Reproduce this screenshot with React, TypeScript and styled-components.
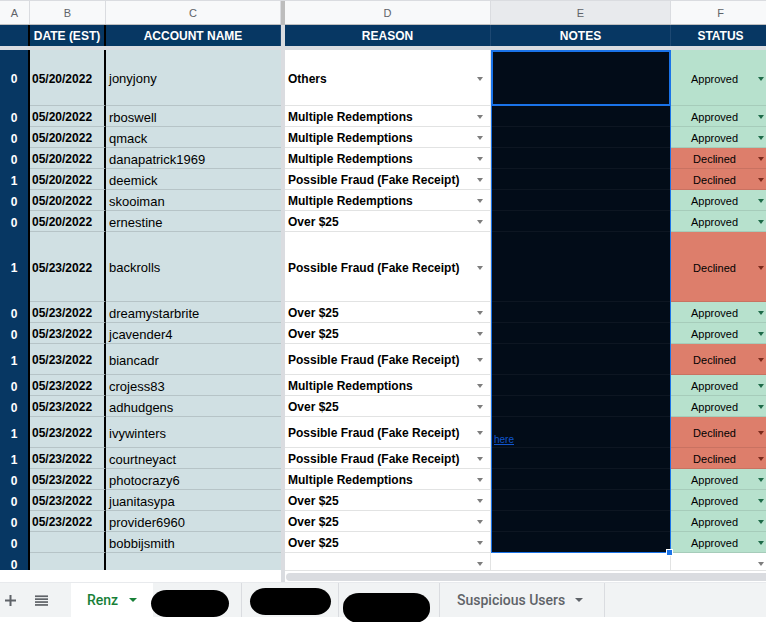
import React from "react";
import styled, { createGlobalStyle } from "styled-components";

const GlobalStyle = createGlobalStyle`
  *, *::before, *::after { box-sizing: border-box; }
  html, body { margin: 0; padding: 0; background: #ffffff; }
  body { font-family: "Liberation Sans", Arial, sans-serif; overflow: hidden; }
`;

const COLS = "30px 76px 175px 4px 206px 180px 100px";
const NAVY = "#073763";
const BLUE = "#1a73e8";

type Status = "Approved" | "Declined";

interface Entry {
  flag: number;
  date?: string;
  name?: string;
  reason?: string;
  status?: Status;
  h?: number;
  note?: string;
}

const entries: Entry[] = [
  { flag: 0, date: "05/20/2022", name: "jonyjony", reason: "Others", status: "Approved", h: 56 },
  { flag: 0, date: "05/20/2022", name: "rboswell", reason: "Multiple Redemptions", status: "Approved" },
  { flag: 0, date: "05/20/2022", name: "qmack", reason: "Multiple Redemptions", status: "Approved" },
  { flag: 0, date: "05/20/2022", name: "danapatrick1969", reason: "Multiple Redemptions", status: "Declined" },
  { flag: 1, date: "05/20/2022", name: "deemick", reason: "Possible Fraud (Fake Receipt)", status: "Declined" },
  { flag: 0, date: "05/20/2022", name: "skooiman", reason: "Multiple Redemptions", status: "Approved" },
  { flag: 0, date: "05/20/2022", name: "ernestine", reason: "Over $25", status: "Approved" },
  { flag: 1, date: "05/23/2022", name: "backrolls", reason: "Possible Fraud (Fake Receipt)", status: "Declined", h: 70 },
  { flag: 0, date: "05/23/2022", name: "dreamystarbrite", reason: "Over $25", status: "Approved" },
  { flag: 0, date: "05/23/2022", name: "jcavender4", reason: "Over $25", status: "Approved" },
  { flag: 1, date: "05/23/2022", name: "biancadr", reason: "Possible Fraud (Fake Receipt)", status: "Declined", h: 31 },
  { flag: 0, date: "05/23/2022", name: "crojess83", reason: "Multiple Redemptions", status: "Approved" },
  { flag: 0, date: "05/23/2022", name: "adhudgens", reason: "Over $25", status: "Approved" },
  { flag: 1, date: "05/23/2022", name: "ivywinters", reason: "Possible Fraud (Fake Receipt)", status: "Declined", h: 31, note: "here" },
  { flag: 1, date: "05/23/2022", name: "courtneyact", reason: "Possible Fraud (Fake Receipt)", status: "Declined" },
  { flag: 0, date: "05/23/2022", name: "photocrazy6", reason: "Multiple Redemptions", status: "Approved" },
  { flag: 0, date: "05/23/2022", name: "juanitasypa", reason: "Over $25", status: "Approved" },
  { flag: 0, date: "05/23/2022", name: "provider6960", reason: "Over $25", status: "Approved" },
  { flag: 0, name: "bobbijsmith", reason: "Over $25", status: "Approved" },
  { flag: 0 },
];

const Page = styled.div`
  width: 766px;
  height: 622px;
  overflow: hidden;
  display: flex;
  flex-direction: column;
  background: #ffffff;
`;

const Sheet = styled.div`
  width: 771px;
  height: 570px;
  flex-shrink: 0;
  overflow: hidden;
`;

const LetterRow = styled.div`
  display: grid;
  grid-template-columns: ${COLS};
  height: 25px;
  background: #f8f9fa;
  border-top: 1px solid #dadce0;
  border-bottom: 1px solid #c0c0c0;
`;

const LetterCell = styled.div<{ $active?: boolean }>`
  display: flex;
  align-items: center;
  justify-content: center;
  font-size: 11px;
  color: #5f6368;
  background: ${(p) => (p.$active ? "#e8eaed" : "transparent")};
  border-right: 1px solid #dadce0;
`;

const Divider = styled.div<{ $dark?: boolean }>`
  background: ${(p) => (p.$dark ? "#bdbdbd" : "#dadce0")};
`;

const HeaderRow = styled.div`
  display: grid;
  grid-template-columns: ${COLS};
  height: 21px;
  background: ${NAVY};
`;

const HeadCell = styled.div<{ $thick?: boolean }>`
  display: flex;
  align-items: center;
  justify-content: center;
  color: #ffffff;
  font-size: 12px;
  font-weight: 700;
  white-space: nowrap;
  border-right: ${(p) => (p.$thick ? "2px solid #000" : "1px solid #1d4872")};
`;

const FreezeBand = styled.div`
  height: 4px;
  background: #dadce0;
`;

const Row = styled.div<{ $h: number }>`
  display: grid;
  grid-template-columns: ${COLS};
  height: ${(p) => p.$h}px;
`;

const NumCell = styled.div`
  display: flex;
  align-items: center;
  justify-content: center;
  padding-top: 2px;
  background: ${NAVY};
  color: #ffffff;
  font-size: 12px;
  font-weight: 700;
  border-right: 2px solid #000;
`;

const DateCell = styled.div`
  display: flex;
  align-items: center;
  padding: 2px 0 0 2px;
  background: #d0e0e3;
  color: #000;
  font-size: 12px;
  font-weight: 700;
  border-right: 2px solid #000;
  border-bottom: 1px solid rgba(0, 0, 0, 0.12);
  white-space: nowrap;
`;

const NameCell = styled.div`
  display: flex;
  align-items: center;
  padding: 2px 0 0 3px;
  background: #d0e0e3;
  color: #000;
  font-size: 13px;
  border-bottom: 1px solid rgba(0, 0, 0, 0.12);
  white-space: nowrap;
`;

const ReasonCell = styled.div`
  display: flex;
  align-items: center;
  justify-content: space-between;
  padding: 2px 7px 0 3px;
  background: #ffffff;
  color: #000;
  font-size: 12px;
  font-weight: 700;
  border-right: 1px solid #e2e3e3;
  border-bottom: 1px solid #e2e3e3;
  white-space: nowrap;
`;

type Sel = "active" | "mid" | "last" | undefined;

const shadowFor = (sel: Sel, line: string) => {
  if (sel === "active") return `inset 0 0 0 2px ${BLUE}`;
  if (sel === "mid")
    return `inset 1px 0 0 ${BLUE}, inset -1px 0 0 ${BLUE}, inset 0 -1px 0 ${line}`;
  if (sel === "last")
    return `inset 1px 0 0 ${BLUE}, inset -1px 0 0 ${BLUE}, inset 0 -1px 0 ${BLUE}`;
  return `inset 0 -1px 0 ${line}, inset -1px 0 0 ${line}`;
};

const NoteCell = styled.div<{ $dark: boolean; $sel: Sel }>`
  position: relative;
  display: flex;
  align-items: flex-end;
  padding: 0 3px 3px;
  background: ${(p) => (p.$dark ? "#020c18" : "#ffffff")};
  box-shadow: ${(p) => shadowFor(p.$sel, p.$dark ? "#0d1622" : "#e2e3e3")};
`;

const NoteLink = styled.a`
  font-size: 10px;
  color: #1155cc;
  text-decoration: underline;
`;

const Handle = styled.span`
  position: absolute;
  right: -2px;
  bottom: -3px;
  width: 7px;
  height: 7px;
  background: ${BLUE};
  border: 1px solid #ffffff;
  z-index: 2;
`;

const statusBg: Record<Status, string> = {
  Approved: "#b7e1cd",
  Declined: "#dd7e6b",
};

const statusArrow: Record<Status, string> = {
  Approved: "#1e6a48",
  Declined: "#7a2a1c",
};

const StatusCell = styled.div<{ $status?: Status }>`
  display: flex;
  align-items: center;
  padding: 2px 7px 0 0;
  background: ${(p) => (p.$status ? statusBg[p.$status] : "#ffffff")};
  color: #000;
  font-size: 11px;
  border-bottom: 1px solid
    ${(p) => (p.$status ? "rgba(0, 0, 0, 0.09)" : "#e2e3e3")};
`;

const StatusText = styled.span`
  flex: 1;
  text-align: center;
`;

const Arrow = styled.span<{ $color: string }>`
  flex-shrink: 0;
  margin-left: auto;
  width: 0;
  height: 0;
  border-left: 3.5px solid transparent;
  border-right: 3.5px solid transparent;
  border-top: 4px solid ${(p) => p.$color};
`;

const ScrollRow = styled.div`
  display: grid;
  grid-template-columns: 281px 4px 1fr;
  height: 12px;
  flex-shrink: 0;
`;

const ScrollBlank = styled.div`
  background: #ffffff;
`;

const ScrollTrack = styled.div`
  padding: 2px 0 1px 1px;
  border-top: 1px solid #e2e3e3;
  background: #ffffff;
`;

const ScrollThumb = styled.div`
  height: 100%;
  background: #dadce0;
  border-radius: 5px 0 0 5px;
`;

const TabBar = styled.div`
  display: flex;
  align-items: stretch;
  height: 35px;
  flex-shrink: 0;
  background: #f1f3f4;
  border-top: 1px solid #e8eaed;
  font-family: Roboto, "Open Sans", sans-serif;
`;

const IconBtn = styled.div<{ $w: number }>`
  width: ${(p) => p.$w}px;
  display: flex;
  align-items: center;
  justify-content: center;
  color: #5f6368;
`;

const TabList = styled.div`
  display: flex;
  margin-left: 9px;
`;

const Tab = styled.div<{ $w: number; $active?: boolean; $pad?: number }>`
  width: ${(p) => p.$w}px;
  display: flex;
  align-items: center;
  padding-left: ${(p) => p.$pad ?? 0}px;
  background: ${(p) => (p.$active ? "#ffffff" : "transparent")};
  color: ${(p) => (p.$active ? "#188038" : "#5f6368")};
  font-size: 14px;
  font-weight: 500;
  border-right: ${(p) => (p.$active ? "none" : "1px solid #dadce0")};
  white-space: nowrap;
`;

const TabArrow = styled.span<{ $color: string; $gap: number }>`
  margin-left: ${(p) => p.$gap}px;
  width: 0;
  height: 0;
  border-left: 4px solid transparent;
  border-right: 4px solid transparent;
  border-top: 4px solid ${(p) => p.$color};
`;

/* black marker strokes covering the hidden sheet names */
const Redaction = styled.span<{ $w: number; $h: number; $dx: number; $dy: number }>`
  align-self: flex-start;
  flex-shrink: 0;
  width: ${(p) => p.$w}px;
  height: ${(p) => p.$h}px;
  margin-left: ${(p) => p.$dx}px;
  margin-top: ${(p) => p.$dy}px;
  background: #000;
  border-radius: 16px / 14px;
`;

const noteSel = (i: number, last: number): Sel => {
  if (i === 0) return "active";
  if (i < last) return "mid";
  if (i === last) return "last";
  return undefined;
};

const App: React.FC = () => {
  const lastSel = entries.length - 2;

  return (
    <Page>
      <GlobalStyle />
      <Sheet>
        <LetterRow>
          <LetterCell>A</LetterCell>
          <LetterCell>B</LetterCell>
          <LetterCell>C</LetterCell>
          <Divider $dark />
          <LetterCell>D</LetterCell>
          <LetterCell $active>E</LetterCell>
          <LetterCell>F</LetterCell>
        </LetterRow>
        <HeaderRow>
          <HeadCell $thick />
          <HeadCell $thick>DATE (EST)</HeadCell>
          <HeadCell>ACCOUNT NAME</HeadCell>
          <Divider />
          <HeadCell>REASON</HeadCell>
          <HeadCell>NOTES</HeadCell>
          <HeadCell>STATUS</HeadCell>
        </HeaderRow>
        <FreezeBand />
        {entries.map((e, i) => {
          const sel = noteSel(i, lastSel);
          const filled = !!e.status;
          return (
            <Row key={i} $h={e.h ?? 21}>
              <NumCell>{e.flag}</NumCell>
              <DateCell>{e.date}</DateCell>
              <NameCell>{e.name}</NameCell>
              <Divider />
              <ReasonCell>
                <span>{e.reason}</span>
                <Arrow $color="#7d7d7d" />
              </ReasonCell>
              <NoteCell $dark={filled} $sel={sel}>
                {e.note && <NoteLink href="#">{e.note}</NoteLink>}
                {sel === "last" && <Handle />}
              </NoteCell>
              <StatusCell $status={e.status}>
                {e.status && <StatusText>{e.status}</StatusText>}
                <Arrow $color={e.status ? statusArrow[e.status] : "#7d7d7d"} />
              </StatusCell>
            </Row>
          );
        })}
      </Sheet>
      <ScrollRow>
        <ScrollBlank />
        <Divider />
        <ScrollTrack>
          <ScrollThumb />
        </ScrollTrack>
      </ScrollRow>
      <TabBar>
        <IconBtn $w={20}>
          <svg width="11" height="11" viewBox="0 0 11 11">
            <path d="M5.5 0v11M0 5.5h11" stroke="#5f6368" strokeWidth="2" />
          </svg>
        </IconBtn>
        <IconBtn $w={42}>
          <svg width="13" height="11" viewBox="0 0 13 11" fill="#5f6368">
            <rect x="0" y="0.4" width="13" height="1.7" />
            <rect x="0" y="3.3" width="13" height="1.7" />
            <rect x="0" y="6.2" width="13" height="1.7" />
            <rect x="0" y="9.1" width="13" height="1.7" />
          </svg>
        </IconBtn>
        <TabList>
          <Tab $w={82} $pad={16} $active>
            Renz
            <TabArrow $color="#188038" $gap={11} />
          </Tab>
          <Tab $w={89}>
            <Redaction $w={78} $h={27} $dx={-2} $dy={7} />
          </Tab>
          <Tab $w={97}>
            <Redaction $w={81} $h={27} $dx={8} $dy={5} />
          </Tab>
          <Tab $w={101}>
            <Redaction $w={87} $h={30} $dx={4} $dy={10} />
          </Tab>
          <Tab $w={165} $pad={17}>
            Suspicious Users
            <TabArrow $color="#5f6368" $gap={10} />
          </Tab>
        </TabList>
      </TabBar>
    </Page>
  );
};

export default App;
